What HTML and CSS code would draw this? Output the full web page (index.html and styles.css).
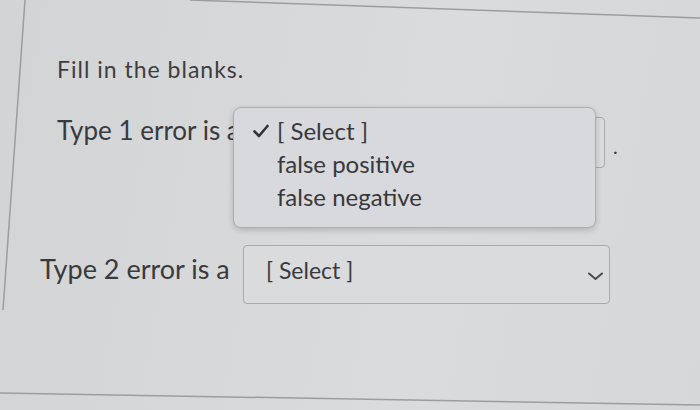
FILE: index.html
```html
<!DOCTYPE html>
<html>
<head>
    <title>Fill in the blanks</title>
    <link rel="stylesheet" href="styles.css">
</head>
<body>
    <div class="page">
        <svg class="edges" width="700" height="410" viewBox="0 0 700 410">
            <line x1="190" y1="0" x2="700" y2="18" />
            <line x1="25" y1="0" x2="3" y2="310" />
            <line x1="0" y1="393" x2="700" y2="405" />
        </svg>

        <h1>Fill in the blanks.</h1>

        <div class="row row-one">
            <span class="label">Type 1 error is a</span>
            <div class="select-wrap">
                <div class="select select-one">
                    <svg class="chevron" width="14" height="9" viewBox="0 0 14 9">
                        <polyline points="1,1.5 7,7 13,1.5" />
                    </svg>
                </div>
                <ul class="menu">
                    <li class="item selected">
                        <svg class="check" width="16" height="14" viewBox="0 0 16 14">
                            <polyline points="1.5,7.5 6,12 14.5,2" />
                        </svg>
                        <span>[ Select ]</span>
                    </li>
                    <li class="item"><span>false positive</span></li>
                    <li class="item"><span>false negative</span></li>
                </ul>
            </div>
            <span class="dot">.</span>
        </div>

        <div class="row row-two">
            <span class="label">Type 2 error is a</span>
            <div class="select select-two">
                <span class="value">[ Select ]</span>
                <svg class="chevron" width="15" height="9" viewBox="0 0 15 9">
                    <polyline points="1,1.5 7.5,7 14,1.5" />
                </svg>
            </div>
        </div>
    </div>
</body>
</html>
```

FILE: styles.css
```css
* {
    margin: 0;
    padding: 0;
    box-sizing: border-box;
    font-family: 'Lato', 'Noto Sans', sans-serif;
}

body {
    width: 700px;
    height: 410px;
    overflow: hidden;
    background: linear-gradient(100deg, #d3d4d6, #dadbdd 60%, #d6d7d9);
    color: #3a3a3d;
}

.page {
    position: relative;
    width: 700px;
    height: 410px;
    padding-top: 55px;
}

.edges {
    position: absolute;
    top: 0;
    left: 0;
    pointer-events: none;
}

.edges line {
    stroke: #9c9da0;
    stroke-width: 1.5;
}

h1 {
    margin-left: 57px;
    font-size: 23px;
    line-height: 28px;
    letter-spacing: 1px;
    font-weight: normal;
    color: #3d3d40;
}

.row {
    display: flex;
    align-items: flex-start;
}

.row-one {
    margin-top: 34px;
    margin-left: 57px;
}

.row-one .label {
    font-size: 26px;
    line-height: 26px;
    width: 178px;
    white-space: nowrap;
}

.select-wrap {
    position: relative;
}

.select {
    display: flex;
    align-items: center;
    justify-content: flex-end;
    background: #dadbdd;
    border: 1px solid #a9aaad;
    border-radius: 4px;
}

.select-one {
    width: 370px;
    height: 51px;
    padding-right: 8px;
}

.chevron polyline {
    fill: none;
    stroke: #4a4a4e;
    stroke-width: 2;
    stroke-linecap: round;
    stroke-linejoin: round;
}

.menu {
    position: absolute;
    top: -10px;
    left: -2px;
    width: 363px;
    height: 121px;
    list-style: none;
    background: #d8d9dc;
    border: 1px solid #aeafb3;
    border-radius: 8px;
    box-shadow: 0 2px 6px rgba(0, 0, 0, 0.18);
    padding: 6px 0 0 19px;
}

.item {
    display: flex;
    align-items: center;
    font-size: 24px;
    line-height: 33px;
    padding-left: 24px;
    color: #38383b;
}

.item.selected {
    padding-left: 0;
}

.check {
    margin-right: 8px;
}

.check polyline {
    fill: none;
    stroke: #333336;
    stroke-width: 2.6;
    stroke-linecap: round;
    stroke-linejoin: round;
}

.dot {
    font-size: 20px;
    line-height: 30px;
    margin-left: 8px;
    padding-top: 14px;
}

.row-two {
    margin-top: 77px;
    margin-left: 40px;
}

.row-two .label {
    font-size: 27px;
    line-height: 47px;
    width: 203px;
    white-space: nowrap;
}

.select-two {
    width: 367px;
    height: 59px;
    align-items: flex-start;
    justify-content: space-between;
    padding: 9px 6px 0 22px;
}

.select-two .value {
    font-size: 23px;
    line-height: 30px;
}

.select-two .chevron {
    margin-top: 17px;
}
```
